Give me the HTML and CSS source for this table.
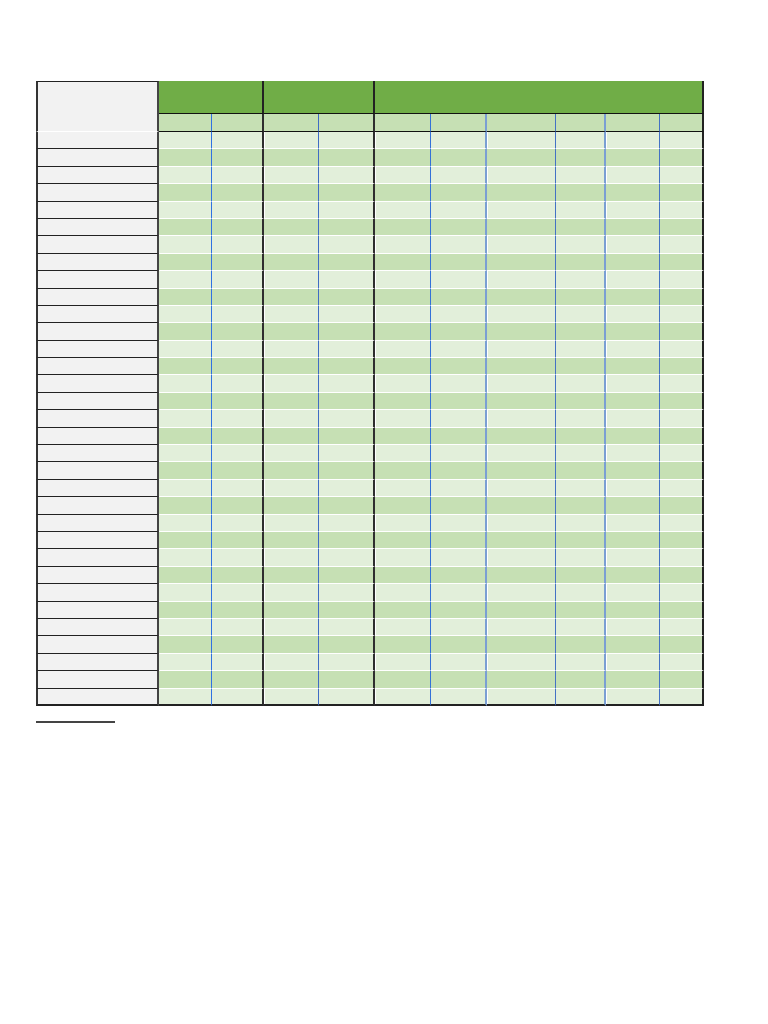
FILE: index.html
```html
<!DOCTYPE html>
<html lang="en">
<head>
<meta charset="utf-8">
<title>Sheet</title>
<link rel="stylesheet" href="styles.css">
</head>
<body>
<div class="page">
  <div class="sheet">
    <div class="corner"></div>
    <div class="hdr g1"></div>
    <div class="hdr g2"></div>
    <div class="hdr g3"></div>
    <div class="row sub"><div></div><div></div><div></div><div></div><div></div><div></div><div></div><div></div><div></div><div></div></div>
    <div class="row data odd"><div></div><div></div><div></div><div></div><div></div><div></div><div></div><div></div><div></div><div></div><div></div></div>
    <div class="row data even"><div></div><div></div><div></div><div></div><div></div><div></div><div></div><div></div><div></div><div></div><div></div></div>
    <div class="row data odd"><div></div><div></div><div></div><div></div><div></div><div></div><div></div><div></div><div></div><div></div><div></div></div>
    <div class="row data even"><div></div><div></div><div></div><div></div><div></div><div></div><div></div><div></div><div></div><div></div><div></div></div>
    <div class="row data odd"><div></div><div></div><div></div><div></div><div></div><div></div><div></div><div></div><div></div><div></div><div></div></div>
    <div class="row data even"><div></div><div></div><div></div><div></div><div></div><div></div><div></div><div></div><div></div><div></div><div></div></div>
    <div class="row data odd"><div></div><div></div><div></div><div></div><div></div><div></div><div></div><div></div><div></div><div></div><div></div></div>
    <div class="row data even"><div></div><div></div><div></div><div></div><div></div><div></div><div></div><div></div><div></div><div></div><div></div></div>
    <div class="row data odd"><div></div><div></div><div></div><div></div><div></div><div></div><div></div><div></div><div></div><div></div><div></div></div>
    <div class="row data even"><div></div><div></div><div></div><div></div><div></div><div></div><div></div><div></div><div></div><div></div><div></div></div>
    <div class="row data odd"><div></div><div></div><div></div><div></div><div></div><div></div><div></div><div></div><div></div><div></div><div></div></div>
    <div class="row data even"><div></div><div></div><div></div><div></div><div></div><div></div><div></div><div></div><div></div><div></div><div></div></div>
    <div class="row data odd"><div></div><div></div><div></div><div></div><div></div><div></div><div></div><div></div><div></div><div></div><div></div></div>
    <div class="row data even"><div></div><div></div><div></div><div></div><div></div><div></div><div></div><div></div><div></div><div></div><div></div></div>
    <div class="row data odd"><div></div><div></div><div></div><div></div><div></div><div></div><div></div><div></div><div></div><div></div><div></div></div>
    <div class="row data even"><div></div><div></div><div></div><div></div><div></div><div></div><div></div><div></div><div></div><div></div><div></div></div>
    <div class="row data odd"><div></div><div></div><div></div><div></div><div></div><div></div><div></div><div></div><div></div><div></div><div></div></div>
    <div class="row data even"><div></div><div></div><div></div><div></div><div></div><div></div><div></div><div></div><div></div><div></div><div></div></div>
    <div class="row data odd"><div></div><div></div><div></div><div></div><div></div><div></div><div></div><div></div><div></div><div></div><div></div></div>
    <div class="row data even"><div></div><div></div><div></div><div></div><div></div><div></div><div></div><div></div><div></div><div></div><div></div></div>
    <div class="row data odd"><div></div><div></div><div></div><div></div><div></div><div></div><div></div><div></div><div></div><div></div><div></div></div>
    <div class="row data even"><div></div><div></div><div></div><div></div><div></div><div></div><div></div><div></div><div></div><div></div><div></div></div>
    <div class="row data odd"><div></div><div></div><div></div><div></div><div></div><div></div><div></div><div></div><div></div><div></div><div></div></div>
    <div class="row data even"><div></div><div></div><div></div><div></div><div></div><div></div><div></div><div></div><div></div><div></div><div></div></div>
    <div class="row data odd"><div></div><div></div><div></div><div></div><div></div><div></div><div></div><div></div><div></div><div></div><div></div></div>
    <div class="row data even"><div></div><div></div><div></div><div></div><div></div><div></div><div></div><div></div><div></div><div></div><div></div></div>
    <div class="row data odd"><div></div><div></div><div></div><div></div><div></div><div></div><div></div><div></div><div></div><div></div><div></div></div>
    <div class="row data even"><div></div><div></div><div></div><div></div><div></div><div></div><div></div><div></div><div></div><div></div><div></div></div>
    <div class="row data odd"><div></div><div></div><div></div><div></div><div></div><div></div><div></div><div></div><div></div><div></div><div></div></div>
    <div class="row data even"><div></div><div></div><div></div><div></div><div></div><div></div><div></div><div></div><div></div><div></div><div></div></div>
    <div class="row data odd"><div></div><div></div><div></div><div></div><div></div><div></div><div></div><div></div><div></div><div></div><div></div></div>
    <div class="row data even"><div></div><div></div><div></div><div></div><div></div><div></div><div></div><div></div><div></div><div></div><div></div></div>
    <div class="row data odd last"><div></div><div></div><div></div><div></div><div></div><div></div><div></div><div></div><div></div><div></div><div></div></div>
  </div>
  <div class="rule"></div>
</div>
</body>
</html>
```

FILE: styles.css
```css
* { box-sizing: border-box; }
html, body { margin: 0; padding: 0; background: #ffffff; font-family: "Liberation Sans", Arial, sans-serif; }

.page { padding: 81px 0 0 36px; }

.sheet {
  display: grid;
  grid-template-columns: 123px 53px 52px 55px 56px 56px 56px 69px 50px 54px 44px;
  grid-template-rows: 33px 18px repeat(33, 17.4px);
  width: 668px;
}

.row { display: contents; }

.corner {
  grid-column: 1;
  grid-row: 1 / 3;
  background: #f2f2f2;
  border-left: 2px solid #333333;
  border-top: 1px solid #222222;
  border-right: 2px solid #444444;
  border-bottom: 1px solid #ffffff;
}

.hdr {
  grid-row: 1;
  background: #70ad47;
  border-right: 2px solid #222222;
  border-bottom: 1px solid #111111;
}
.g1 { grid-column: 2 / 4; }
.g2 { grid-column: 4 / 6; }
.g3 { grid-column: 6 / 12; }

.sub > div {
  grid-row: 2;
  background: #c6e0b4;
  border-bottom: 1px solid #111111;
}

.data > div { border-bottom: 1px solid #ffffff; }
.data.odd > div { background: #e2efda; }
.data.even > div { background: #c6e0b4; }

.data > div:first-child {
  grid-column: 1;
  background: #f2f2f2;
  border-left: 2px solid #333333;
  border-right: 2px solid #444444;
  border-bottom: 1px solid #222222;
}

/* column separators */
.data > :nth-child(2), .sub > :nth-child(1) { border-right: 1px solid #2f72e2; }
.data > :nth-child(3), .sub > :nth-child(2) { border-right: 2px solid #2e2e2e; }
.data > :nth-child(4), .sub > :nth-child(3) { border-right: 1px solid #3f6cc4; }
.data > :nth-child(5), .sub > :nth-child(4) { border-right: 2px solid #2e2e2e; }
.data > :nth-child(6), .sub > :nth-child(5) { border-right: 1px solid #3371d8; }
.data > :nth-child(7), .sub > :nth-child(6) { border-right: 2px solid #7a9fd3; }
.data > :nth-child(8), .sub > :nth-child(7) { border-right: 1px solid #4472c4; }
.data > :nth-child(9), .sub > :nth-child(8) { border-right: 2px solid #7a9fd3; }
.data > :nth-child(10), .sub > :nth-child(9) { border-right: 1px solid #4472c4; }
.data > :nth-child(11), .sub > :nth-child(10) { border-right: 2px solid #222222; }

.data.odd > :nth-child(4),
.data.odd > :nth-child(6),
.data.odd > :nth-child(8),
.data.odd > :nth-child(10) { box-shadow: inset 1px 0 0 #ffffff; }

.data.last > div { border-bottom: 2px solid #222222; }

.rule {
  width: 79px;
  height: 2px;
  margin-top: 15px;
  background: #444444;
}
```
